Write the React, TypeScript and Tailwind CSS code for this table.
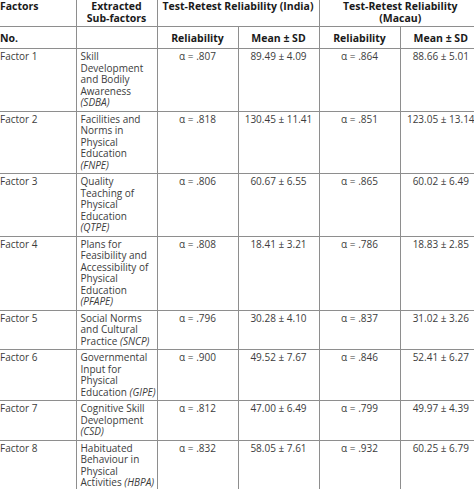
const rows = [
  {
    no: "Factor 1",
    text: "Skill Development and Bodily Awareness",
    abbr: "SDBA",
    br: true,
    india: [".807", "89.49 ± 4.09"],
    macau: [".864", "88.66 ± 5.01"],
  },
  {
    no: "Factor 2",
    text: "Facilities and Norms in Physical Education",
    abbr: "FNPE",
    br: true,
    india: [".818", "130.45 ± 11.41"],
    macau: [".851", "123.05 ± 13.14"],
  },
  {
    no: "Factor 3",
    text: "Quality Teaching of Physical Education",
    abbr: "QTPE",
    br: true,
    india: [".806", "60.67 ± 6.55"],
    macau: [".865", "60.02 ± 6.49"],
  },
  {
    no: "Factor 4",
    text: "Plans for Feasibility and Accessibility of Physical Education",
    abbr: "PFAPE",
    br: true,
    india: [".808", "18.41 ± 3.21"],
    macau: [".786", "18.83 ± 2.85"],
  },
  {
    no: "Factor 5",
    text: "Social Norms and Cultural Practice",
    abbr: "SNCP",
    br: false,
    india: [".796", "30.28 ± 4.10"],
    macau: [".837", "31.02 ± 3.26"],
  },
  {
    no: "Factor 6",
    text: "Governmental Input for Physical Education",
    abbr: "GIPE",
    br: false,
    india: [".900", "49.52 ± 7.67"],
    macau: [".846", "52.41 ± 6.27"],
  },
  {
    no: "Factor 7",
    text: "Cognitive Skill Development",
    abbr: "CSD",
    br: true,
    india: [".812", "47.00 ± 6.49"],
    macau: [".799", "49.97 ± 4.39"],
  },
  {
    no: "Factor 8",
    text: "Habituated Behaviour in Physical Activities",
    abbr: "HBPA",
    br: false,
    india: [".832", "58.05 ± 7.61"],
    macau: [".932", "60.25 ± 6.79"],
  },
];

const line = "border-[#8e8e8e]";
const th = `border ${line} align-top font-bold text-[#1a1a1a] text-[10.5px] leading-[12px]`;
const td = `border ${line} align-top text-[#3c3c3c] text-[10px] leading-[11.5px] pt-[2px] pb-[2px]`;

export default function App() {
  return (
    <div
      className="w-[474px] h-[489px] overflow-hidden bg-white"
      style={{ fontFamily: '"Open Sans", "Noto Sans", sans-serif' }}
    >
      <table className="w-[481px] table-fixed border-collapse border-hidden">
        <colgroup>
          <col className="w-[76px]" />
          <col className="w-[81px]" />
          <col className="w-[81px]" />
          <col className="w-[81px]" />
          <col className="w-[81px]" />
          <col className="w-[81px]" />
        </colgroup>
        <thead>
          <tr>
            <th className={`${th} text-left pl-0 pb-[2px]`}>Factors</th>
            <th className={`${th} text-center pb-[2px]`}>
              Extracted
              <br />
              Sub-factors
            </th>
            <th colSpan={2} className={`${th} text-center pb-[2px]`}>
              Test-Retest Reliability (India)
            </th>
            <th colSpan={2} className={`${th} text-center pb-[2px]`}>
              Test-Retest Reliability
              <br />
              (Macau)
            </th>
          </tr>
          <tr>
            <th className={`${th} text-left pt-[5px] pb-[4px]`}>No.</th>
            <th className={th}></th>
            <th className={`${th} text-center pt-[5px] pb-[4px]`}>Reliability</th>
            <th className={`${th} text-center pt-[5px] pb-[4px]`}>Mean ± SD</th>
            <th className={`${th} text-center pt-[5px] pb-[4px]`}>Reliability</th>
            <th className={`${th} text-center pt-[5px] pb-[4px] whitespace-nowrap`}>Mean ± SD</th>
          </tr>
        </thead>
        <tbody>
          {rows.map((r) => (
            <tr key={r.no}>
              <td className={`${td} text-left`}>{r.no}</td>
              <td className={`${td} text-left pl-[4px] pr-0`}>
                {r.text}
                {r.br ? <br /> : " "}
                <span className="italic">({r.abbr})</span>
              </td>
              <td className={`${td} text-center`}>α = {r.india[0]}</td>
              <td className={`${td} text-center whitespace-nowrap`}>{r.india[1]}</td>
              <td className={`${td} text-center`}>α = {r.macau[0]}</td>
              <td className={`${td} text-center whitespace-nowrap`}>{r.macau[1]}</td>
            </tr>
          ))}
        </tbody>
      </table>
    </div>
  );
}
